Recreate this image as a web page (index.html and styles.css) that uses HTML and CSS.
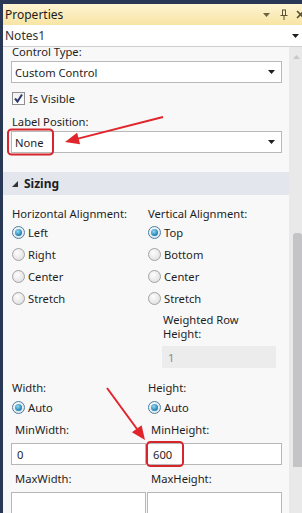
FILE: index.html
```html
<!DOCTYPE html>
<html>
<head>
<meta charset="utf-8">
<link rel="stylesheet" href="styles.css">
</head>
<body>
<div class="window">
  <div class="titlebar">
    <span class="title">Properties</span>
    <span class="tools">
      <svg class="tool-caret" width="7" height="4" viewBox="0 0 7 4"><path d="M0 0H7L3.5 4Z" fill="#6b6440"/></svg>
      <svg class="tool-pin" width="8" height="11" viewBox="0 0 8 11"><path d="M2 0.5H6V6H7.5V7H4.5V11H3.5V7H0.5V6H2Z M3 1.5V6H5V1.5Z" fill="#5a5232" fill-rule="evenodd"/></svg>
      <svg class="tool-close" width="9" height="9" viewBox="0 0 9 9"><path d="M1 1L8 8M8 1L1 8" stroke="#5a5232" stroke-width="1.6"/></svg>
    </span>
  </div>
  <div class="objectbar">
    <span>Notes1</span>
    <svg width="7" height="4" viewBox="0 0 7 4"><path d="M0 0H7L3.5 4Z" fill="#1e1e1e"/></svg>
  </div>
  <div class="main">
    <div class="content">
      <div class="label first">Control Type:</div>
      <div class="select"><span>Custom Control</span><svg width="7" height="4" viewBox="0 0 7 4"><path d="M0 0H7L3.5 4Z" fill="#1e1e1e"/></svg></div>
      <div class="check-row">
        <span class="checkbox"><svg width="11" height="11" viewBox="0 0 11 11"><path d="M2 5.5L4.5 8.5L9 1.5" fill="none" stroke="#2c3a6b" stroke-width="2"/></svg></span>
        <span>Is Visible</span>
      </div>
      <div class="label lp">Label Position:</div>
      <div class="select"><span>None</span><svg width="7" height="4" viewBox="0 0 7 4"><path d="M0 0H7L3.5 4Z" fill="#1e1e1e"/></svg></div>

      <div class="group-header">
        <svg width="6" height="6" viewBox="0 0 6 6"><path d="M6 0V6H0Z" fill="#333"/></svg>
        <span>Sizing</span>
      </div>

      <div class="two-col align">
        <div class="col">
          <div class="label">Horizontal Alignment:</div>
          <div class="radio-row"><span class="radio on"></span><span>Left</span></div>
          <div class="radio-row"><span class="radio"></span><span>Right</span></div>
          <div class="radio-row"><span class="radio"></span><span>Center</span></div>
          <div class="radio-row"><span class="radio"></span><span>Stretch</span></div>
        </div>
        <div class="col">
          <div class="label">Vertical Alignment:</div>
          <div class="radio-row"><span class="radio on"></span><span>Top</span></div>
          <div class="radio-row"><span class="radio"></span><span>Bottom</span></div>
          <div class="radio-row"><span class="radio"></span><span>Center</span></div>
          <div class="radio-row"><span class="radio"></span><span>Stretch</span></div>
          <div class="weighted">
            <div class="label tight">Weighted Row</div>
            <div class="label tight">Height:</div>
            <div class="input disabled">1</div>
          </div>
        </div>
      </div>

      <div class="two-col size">
        <div class="col">
          <div class="label">Width:</div>
          <div class="radio-row"><span class="radio on"></span><span>Auto</span></div>
          <div class="label sub">MinWidth:</div>
          <div class="input">0</div>
          <div class="label sub next">MaxWidth:</div>
          <div class="input"></div>
        </div>
        <div class="col">
          <div class="label">Height:</div>
          <div class="radio-row"><span class="radio on"></span><span>Auto</span></div>
          <div class="label sub">MinHeight:</div>
          <div class="input">600</div>
          <div class="label sub next">MaxHeight:</div>
          <div class="input"></div>
        </div>
      </div>
    </div>
    <div class="scrollbar">
      <svg class="sb-up" width="7" height="4" viewBox="0 0 7 4"><path d="M0 4H7L3.5 0Z" fill="#c9c9c9"/></svg>
      <div class="thumb"></div>
    </div>
  </div>
</div>

<svg class="annotations" width="302" height="513" viewBox="0 0 302 513">
  <rect x="8" y="129.5" width="45" height="25" rx="3.5" fill="none" stroke="#d6252c" stroke-width="2"/>
  <rect x="147" y="442" width="36" height="24" rx="3.5" fill="none" stroke="#d6252c" stroke-width="2"/>
  <line x1="163" y1="117" x2="78" y2="138.6" stroke="#e0252b" stroke-width="2"/>
  <polygon points="65,142 80.1,144.3 77.1,132.7" fill="#e0252b"/>
  <line x1="107" y1="388" x2="137" y2="429" stroke="#e0252b" stroke-width="2"/>
  <polygon points="145,440 131.9,432.3 141.6,425.2" fill="#e0252b"/>
</svg>
</body>
</html>
```

FILE: styles.css
```css
* { box-sizing: border-box; }
html, body {
  margin: 0;
  padding: 0;
}
body {
  width: 302px;
  height: 513px;
  overflow: hidden;
  position: relative;
  font-family: "Noto Sans", "Open Sans", sans-serif;
  font-size: 11.2px;
  color: #1e1e1e;
  background: #293955;
}
.window {
  height: 513px;
  margin-left: 3px;
  padding-top: 4px;
  display: flex;
  flex-direction: column;
}
.titlebar {
  height: 21px;
  flex: none;
  display: flex;
  align-items: center;
  justify-content: space-between;
  padding-left: 2px;
  background: linear-gradient(#fdf4d2, #f8e4a4);
  font-size: 12px;
  color: #1b1b1b;
}
.tools {
  display: flex;
  align-items: center;
  gap: 0;
}
.tool-caret { margin-right: 10px; margin-top: 1px; }
.tool-pin { margin-right: 8px; }
.tool-close { margin-right: -3px; }
.objectbar {
  height: 22px;
  flex: none;
  background: #fff;
  border-bottom: 1px solid #cfcfcf;
  display: flex;
  align-items: center;
  justify-content: space-between;
  padding: 0 3px 0 2px;
  font-size: 12px;
  color: #333;
}
.main {
  flex: 1;
  display: flex;
  min-height: 0;
  background: #f7f7f7;
}
.content {
  flex: 1;
  overflow: hidden;
  padding: 0 7px 0 8px;
  background: #f8f8f8;
}
.scrollbar {
  width: 13px;
  flex: none;
  background: #e9e9e9;
  display: flex;
  flex-direction: column;
  align-items: center;
}
.sb-up { margin-top: 8px; margin-left: 2px; }
.thumb {
  margin-top: 174px;
  margin-left: 3px;
  width: 9px;
  height: 234px;
  background: #c4c4c6;
  border-radius: 3px 3px 0 0;
}
.label {
  line-height: 14px;
  height: 14px;
  padding-left: 1px;
  white-space: nowrap;
}
.label.first { margin-top: -2px; }
.select {
  margin-top: 2px;
  height: 22px;
  background: #fff;
  border: 1px solid #b9b9b9;
  display: flex;
  align-items: center;
  justify-content: space-between;
  padding: 0 6px 0 3px;
}
.check-row {
  margin-top: 7px;
  height: 16px;
  display: flex;
  align-items: center;
  gap: 4px;
  padding-left: 1px;
}
.checkbox {
  width: 13px;
  height: 13px;
  border: 1px solid #8e8f8f;
  background: linear-gradient(#f1f1f1, #fff);
  display: flex;
  align-items: center;
  justify-content: center;
}
.label.lp { margin-top: 9px; }
.group-header {
  margin: 19px -7px 0 -8px;
  height: 23px;
  background: #e3e6ec;
  display: flex;
  align-items: center;
  gap: 6px;
  padding-left: 9px;
  font-weight: bold;
  font-size: 12px;
}
.two-col {
  display: grid;
  grid-template-columns: 135px 135px;
  column-gap: 1px;
}
.two-col.align { margin-top: 12px; }
.two-col.size { margin-top: 13px; }
.radio-row {
  height: 22px;
  display: flex;
  align-items: center;
  gap: 3px;
  padding-left: 1px;
}
.radio {
  width: 13px;
  height: 13px;
  border-radius: 50%;
  border: 1px solid #a3a3a3;
  background: radial-gradient(circle at 40% 35%, #fdfdfd, #d9d9d9);
  position: relative;
  flex: none;
}
.radio.on {
  border-color: #4d7fa6;
  background: radial-gradient(circle at 40% 35%, #fdfdfd, #d5dde4);
}
.radio.on::after {
  content: "";
  position: absolute;
  left: 2px;
  top: 2px;
  width: 7px;
  height: 7px;
  border-radius: 50%;
  background: radial-gradient(circle at 40% 35%, #8fd8f4, #1f7fae 70%);
}
.weighted {
  margin-top: 4px;
  padding-left: 15px;
}
.label.tight { height: 14px; }
.input {
  height: 22px;
  background: #fff;
  border: 1px solid #b7b7b7;
  display: flex;
  align-items: center;
  padding-left: 5px;
}
.weighted .input {
  margin-top: 5px;
  width: 114px;
}
.input.disabled {
  background: #ececec;
  border-color: #ececec;
  color: #8a8a8a;
}
.label.sub { margin-top: 5px; padding-left: 4px; }
.size .radio-row { margin-top: 1px; }
.size .label.sub + .input { margin-top: 6px; }
.label.sub.next { margin-top: 7px; }
.annotations {
  position: absolute;
  left: 0;
  top: 0;
}
```
